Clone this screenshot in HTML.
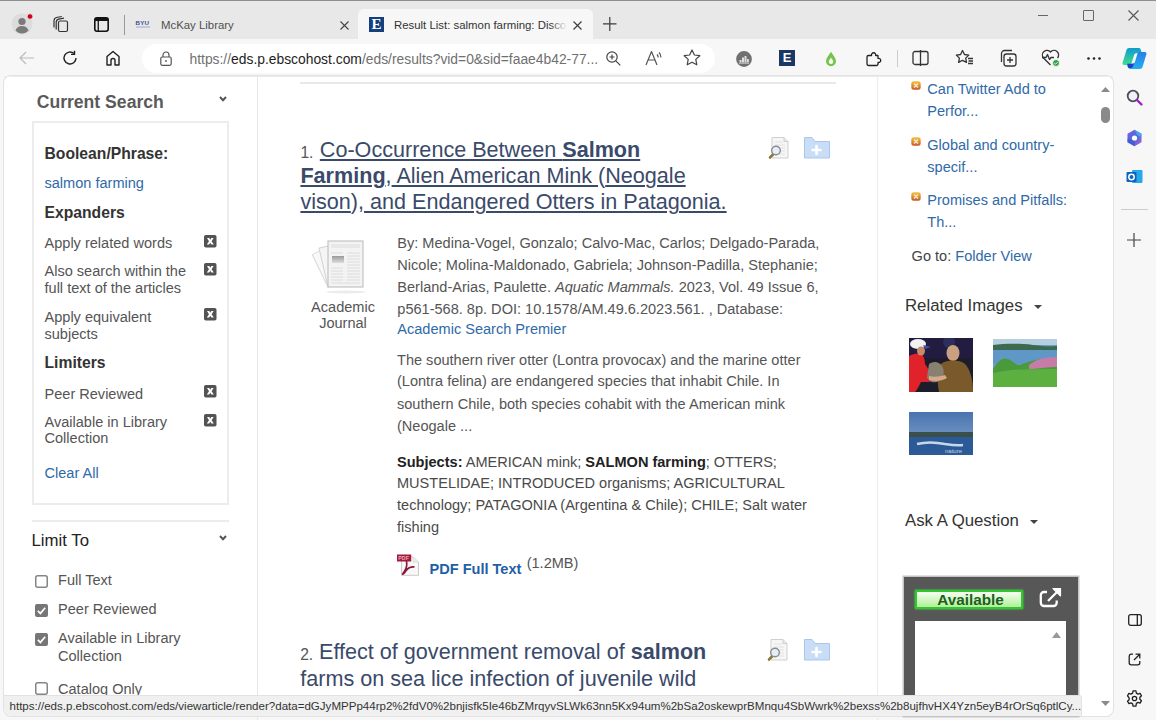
<!DOCTYPE html>
<html><head><meta charset="utf-8">
<style>
*{margin:0;padding:0;box-sizing:border-box}
html,body{width:1156px;height:720px;overflow:hidden;background:#f7f7f7;font-family:"Liberation Sans",sans-serif;position:relative}
.a{position:absolute}
.t{white-space:nowrap}
#tabbar{left:0;top:0;width:1156px;height:39px;background:#e8e8e8;border-top:1px solid #8e8e8e}
#toolbar{left:0;top:39px;width:1156px;height:37px;background:#f7f7f7}
#page{left:4px;top:76px;width:1109px;height:640px;background:#fff;border-radius:7px;overflow:hidden;box-shadow:0 0 0 1px #e4e4e4}
svg{position:absolute;overflow:visible}
.ul{text-decoration:underline;text-decoration-thickness:1.6px;text-underline-offset:1.5px}
</style></head>
<body>
<!-- TAB BAR -->
<div id="tabbar" class="a"></div>
<!-- profile -->
<svg style="left:11px;top:13px" width="22" height="22" viewBox="0 0 22 22">
  <circle cx="11" cy="11" r="10.5" fill="#dcdcdc"/>
  <circle cx="11" cy="8.5" r="3.6" fill="#7a7a7a"/>
  <path d="M4.5 17.5c1-3.2 3.6-4.6 6.5-4.6s5.5 1.4 6.5 4.6c-1.7 1.9-4 3-6.5 3s-4.8-1.1-6.5-3z" fill="#7a7a7a"/>
  <circle cx="19" cy="3.5" r="2.8" fill="#d0021b" stroke="#e8e8e8" stroke-width="0.8"/>
</svg>
<!-- tab actions -->
<svg style="left:52px;top:16px" width="18" height="17" viewBox="0 0 18 17" fill="none" stroke="#333" stroke-width="1.2">
  <rect x="6.5" y="5" width="9" height="10.5" rx="1.5"/>
  <path d="M4.2 13.5V6.3c0-1.5 1-2.8 2.3-3.2l5.5-1"/>
  <path d="M2 11.5V4.5c0-1.5 1-2.6 2.3-3l5.5-1"/>
</svg>
<!-- vertical tabs -->
<svg style="left:94px;top:17px" width="15" height="15" viewBox="0 0 15 15">
  <rect x="0.8" y="0.8" width="13.4" height="13.4" rx="2.2" fill="none" stroke="#111" stroke-width="1.6"/>
  <rect x="0.8" y="0.8" width="13.4" height="3.2" rx="1" fill="#111"/>
  <rect x="3.6" y="3" width="1.3" height="11" fill="#111"/>
</svg>
<div class="a" style="left:124px;top:15px;width:1px;height:20px;background:#9a9a9a"></div>
<!-- McKay tab -->
<div class="a t" style="left:135.5px;top:18.5px;font-size:6.2px;line-height:7px;font-weight:bold;color:#3b4f90;letter-spacing:0.2px">BYU</div>
<div class="a" style="left:136px;top:25.5px;width:14px;height:2px;background:#c4c8d8"></div>
<div class="a t" style="left:161px;top:18.5px;font-size:11.4px;line-height:13px;color:#505050">McKay Library</div>
<svg style="left:339.5px;top:20.5px" width="9" height="9" viewBox="0 0 9 9" stroke="#444" stroke-width="1.1"><path d="M0.5 0.5l8 8M8.5 0.5l-8 8"/></svg>
<!-- active tab -->
<div class="a" style="left:358px;top:9px;width:235px;height:31px;background:#f7f7f7;border-radius:6px 6px 0 0"></div>
<div class="a" style="left:369px;top:17px;width:15px;height:15px;background:#14407e"></div>
<div class="a t" style="left:369px;top:15px;width:15px;text-align:center;font-family:'Liberation Serif',serif;font-weight:bold;font-size:15px;color:#fff;line-height:18px">E</div>
<div class="a t" style="left:394px;top:18.5px;font-size:11.4px;line-height:13px;color:#333;width:175px;overflow:hidden">Result List: salmon farming: Discove</div>
<div class="a" style="left:550px;top:12px;width:20px;height:24px;background:linear-gradient(90deg,rgba(247,247,247,0),#f7f7f7 85%)"></div>
<svg style="left:573px;top:20.5px" width="9" height="9" viewBox="0 0 9 9" stroke="#3a3a3a" stroke-width="1.1"><path d="M0.5 0.5l8 8M8.5 0.5l-8 8"/></svg>
<svg style="left:603px;top:17px" width="14" height="14" viewBox="0 0 14 14" stroke="#3a3a3a" stroke-width="1.2"><path d="M6.8 0v14M0 6.8h13.5"/></svg>
<!-- window controls -->
<div class="a" style="left:1038px;top:15px;width:10px;height:1px;background:#666"></div>
<div class="a" style="left:1083px;top:10px;width:11px;height:11px;border:1px solid #666;border-radius:1px"></div>
<svg style="left:1128px;top:10px" width="11" height="11" viewBox="0 0 11 11" stroke="#555" stroke-width="1.1"><path d="M0.5 0.5l10 10M10.5 0.5l-10 10"/></svg>

<!-- TOOLBAR -->
<div id="toolbar" class="a"></div>
<svg style="left:19px;top:51px" width="16" height="14" viewBox="0 0 16 14" fill="none" stroke="#bbb" stroke-width="1.2"><path d="M15 7H1.5M7 1L1 7l6 6"/></svg>
<svg style="left:62px;top:50px" width="16" height="16" viewBox="0 0 16 16" fill="none" stroke="#222" stroke-width="1.4"><path d="M14 8a6 6 0 1 1-2-4.5"/><path d="M12.5 0.8v3.6H9"/></svg>
<svg style="left:105px;top:50px" width="16" height="16" viewBox="0 0 16 16" fill="none" stroke="#222" stroke-width="1.4"><path d="M2 15V6.5L8 1.5l6 5V15h-4v-4.5a2 2 0 0 0-4 0V15z" stroke-linejoin="round"/></svg>
<div class="a" style="left:142px;top:44px;width:573px;height:29px;background:#fff;border-radius:15px"></div>
<svg style="left:160px;top:51px" width="12" height="15" viewBox="0 0 12 15" fill="none" stroke="#555" stroke-width="1.2"><rect x="0.8" y="6" width="10.4" height="8.3" rx="1.5"/><path d="M3 6V4a3 3 0 0 1 6 0v2"/><circle cx="6" cy="10" r="0.9" fill="#555" stroke="none"/></svg>
<div class="a t" style="left:189.5px;top:51px;font-size:13.85px;line-height:16px;color:#707070"><span>https://</span><span style="color:#1e1e1e">eds.p.ebscohost.com</span>/eds/results?vid=0&amp;sid=faae4b42-77...</div>
<svg style="left:606px;top:51px" width="15" height="15" viewBox="0 0 15 15" fill="none" stroke="#444" stroke-width="1.2"><circle cx="6" cy="6" r="5.2"/><path d="M9.8 9.8l4.5 4.5M6 3.5v5M3.5 6h5"/></svg>
<svg style="left:645px;top:50px" width="18" height="16" viewBox="0 0 18 16" fill="none" stroke="#555" stroke-width="1.2" stroke-linejoin="round"><path d="M1 15L6.5 1.5 12 15M3 10h7"/><path d="M12 4.5c.8.8 1.2 1.8 1.2 3M14 2.5c1.3 1.3 2 3 2 5"/></svg>
<svg style="left:683px;top:49px" width="18" height="17" viewBox="0 0 18 17" fill="none" stroke="#444" stroke-width="1.2" stroke-linejoin="round"><path d="M9 1l2.4 5 5.4.7-4 3.7 1 5.4L9 13.2l-4.8 2.6 1-5.4-4-3.7L6.6 6z"/></svg>
<!-- extension icons -->
<svg style="left:736px;top:51px" width="16" height="16" viewBox="0 0 16 16"><circle cx="8" cy="8" r="7.9" fill="#707070"/><path d="M3.5 11.5V9h2v2.5zm2.5 0V6.5h2v5zm2.5 0V5h2v6.5zm2.5 0V8h1.8v3.5z" fill="#e0e0e0"/><path d="M3 12.2h10" stroke="#e0e0e0" stroke-width="0.8"/></svg>
<div class="a" style="left:779px;top:50px;width:16px;height:16px;background:#1b3764"></div>
<div class="a t" style="left:779px;top:50px;width:16px;font-size:13px;font-weight:bold;color:#fff;text-align:center;line-height:16px">E</div>
<svg style="left:824.5px;top:50.5px" width="12" height="16" viewBox="0 0 12 16"><path d="M6 0.8C3.8 4.3 1 7.5 1 10.3a5 5 0 0 0 10 0C11 7.5 8.2 4.3 6 0.8z" fill="#74c44a"/><path d="M6 6.5c-1 1.6-2.3 3-2.3 4.2a2.3 2.3 0 0 0 4.6 0c0-1.2-1.3-2.6-2.3-4.2z" fill="#f4fbef"/></svg>
<svg style="left:865px;top:50px" width="17" height="17" viewBox="0 0 17 17" fill="none" stroke="#222" stroke-width="1.3" stroke-linejoin="round"><path d="M3.5 5.5H6.6A2.1 2.1 0 1 1 10.6 5.5H13V8.4A2.1 2.1 0 1 1 13 12.4V14a1.5 1.5 0 0 1-1.5 1.5H3.5A1.5 1.5 0 0 1 2 14V7a1.5 1.5 0 0 1 1.5-1.5z"/></svg>
<div class="a" style="left:897px;top:50px;width:1px;height:17px;background:#ccc"></div>
<svg style="left:912px;top:50px" width="17" height="16" viewBox="0 0 17 16" fill="none" stroke="#333" stroke-width="1.3"><rect x="1" y="1.5" width="15" height="13" rx="2"/><path d="M8.5 0v16"/></svg>
<svg style="left:955px;top:49px" width="19" height="17" viewBox="0 0 19 17" fill="none" stroke="#333" stroke-width="1.3" stroke-linejoin="round"><path d="M7.5 1.5l2 4 4.3.6-3.1 3 .8 4.3-4-2.1-3.9 2.1.8-4.3-3.1-3 4.3-.6z"/><path d="M13 9.5h5M13.5 12h4.5M13 14.5h5"/></svg>
<svg style="left:999px;top:49px" width="18" height="18" viewBox="0 0 18 18" fill="none" stroke="#333" stroke-width="1.3"><rect x="5" y="5" width="12" height="12" rx="2.5"/><path d="M2.5 13V4.5A3 3 0 0 1 5.5 1.5H13"/><path d="M11 8v6M8 11h6"/></svg>
<svg style="left:1041px;top:49px" width="19" height="18" viewBox="0 0 19 18" fill="none" stroke="#333" stroke-width="1.3" stroke-linejoin="round"><path d="M9.5 16L2.5 9A4 4 0 0 1 9.5 3a4 4 0 0 1 7 6"/><path d="M1 8.5h4l1.5-3 2 5 1.5-2h3"/><circle cx="15" cy="14" r="3.5" fill="#2ea043" stroke="#f7f7f7" stroke-width="1"/><path d="M13.3 14l1.2 1.2 2-2" stroke="#fff" stroke-width="1"/></svg>
<svg style="left:1087px;top:57px" width="14" height="3" viewBox="0 0 14 3" fill="#222"><circle cx="1.5" cy="1.5" r="1.3"/><circle cx="7" cy="1.5" r="1.3"/><circle cx="12.5" cy="1.5" r="1.3"/></svg>
<svg style="left:1122px;top:47px" width="25" height="23" viewBox="0 0 25 23">
  <defs><linearGradient id="cg1" x1="0" y1="0" x2="0" y2="1"><stop offset="0" stop-color="#0f9ad0"/><stop offset="1" stop-color="#3ee08a"/></linearGradient>
  <linearGradient id="cg2" x1="0" y1="0" x2="0" y2="1"><stop offset="0" stop-color="#2a7ee8"/><stop offset="1" stop-color="#22b0f0"/></linearGradient></defs>
  <path d="M7 1h9.5c1.3 0 2 .6 2.3 1.8l1 3.5H14.5c-1.2 0-2 .7-2.4 1.8L9.5 16.5c-.4 1-1.2 1.5-2.3 1.5H2.2c-1.3 0-2-1-1.6-2.3L4.5 3C5 1.7 5.8 1 7 1z" fill="url(#cg1)"/>
  <path d="M18 22H8.5c-1.3 0-2-.6-2.3-1.8l-1-3.5h5.3c1.2 0 2-.7 2.4-1.8L15.5 6.5c.4-1 1.2-1.5 2.3-1.5h5c1.3 0 2 1 1.6 2.3L20.5 20c-.5 1.3-1.3 2-2.5 2z" fill="url(#cg2)"/>
  <path d="M5.3 16.7h5.2c.8 0 1.3-.3 1.7-.9L11 19.5c-.4.9-1 1.4-2 1.4H7.5c-1 0-1.6-.6-1.9-1.5z" fill="#1f3fc8"/>
</svg>

<!-- PAGE -->
<div class="a" style="left:4px;top:76px;width:1109px;height:640px;background:#fff;border-radius:7px;box-shadow:0 0 0 1px #e2e2e2"></div>
<div class="a" style="left:4px;top:76px;width:1109px;height:1px;background:#ececec"></div>
<div class="a" style="left:257px;top:76px;width:1px;height:644px;background:#e6e6e6"></div>
<div class="a" style="left:877px;top:76px;width:1px;height:644px;background:#ececec"></div>
<div class="a" style="left:300px;top:82px;width:536px;height:2px;background:#e9e9e9"></div>
<div class="a t " style="left:36.7px;top:93.37px;font-size:17.6px;line-height:19.66px;color:#5a5a5a;font-weight:bold;">Current Search</div>
<svg style="left:218.5px;top:95.5px" width="8" height="6" viewBox="0 0 8 6" fill="none" stroke="#555" stroke-width="2"><path d="M1 1l3 3.2L7 1"/></svg>
<div class="a" style="left:32px;top:121px;width:197px;height:384px;border:2px solid #ececec"></div>
<div class="a t " style="left:44.5px;top:144.79px;font-size:15.7px;line-height:17.54px;color:#333;font-weight:bold;">Boolean/Phrase:</div>
<div class="a t " style="left:44.5px;top:174.53px;font-size:14.55px;line-height:16.25px;color:#2f6aa8;font-weight:normal;">salmon farming</div>
<div class="a t " style="left:44.5px;top:203.99px;font-size:15.7px;line-height:17.54px;color:#333;font-weight:bold;">Expanders</div>
<div class="a t " style="left:44.5px;top:234.83px;font-size:14.55px;line-height:16.25px;color:#555;font-weight:normal;">Apply related words</div>
<svg style="left:203.5px;top:235px" width="12.5" height="12.5" viewBox="0 0 12.5 12.5"><rect x="0" y="0" width="12.5" height="12.5" rx="1.8" fill="#535353"/><path d="M3 3h2.3l1 1.7 1-1.7h2.3L7.6 6.2l2.2 3.3H7.4L6.3 7.7 5.2 9.5H2.8L5 6.2z" fill="#fff"/></svg>
<div class="a t " style="left:44.5px;top:263.33px;font-size:14.55px;line-height:16.25px;color:#555;font-weight:normal;">Also search within the</div>
<div class="a t " style="left:44.5px;top:280.23px;font-size:14.55px;line-height:16.25px;color:#555;font-weight:normal;">full text of the articles</div>
<svg style="left:203.5px;top:263px" width="12.5" height="12.5" viewBox="0 0 12.5 12.5"><rect x="0" y="0" width="12.5" height="12.5" rx="1.8" fill="#535353"/><path d="M3 3h2.3l1 1.7 1-1.7h2.3L7.6 6.2l2.2 3.3H7.4L6.3 7.7 5.2 9.5H2.8L5 6.2z" fill="#fff"/></svg>
<div class="a t " style="left:44.5px;top:309.03px;font-size:14.55px;line-height:16.25px;color:#555;font-weight:normal;">Apply equivalent</div>
<div class="a t " style="left:44.5px;top:325.83px;font-size:14.55px;line-height:16.25px;color:#555;font-weight:normal;">subjects</div>
<svg style="left:203.5px;top:308px" width="12.5" height="12.5" viewBox="0 0 12.5 12.5"><rect x="0" y="0" width="12.5" height="12.5" rx="1.8" fill="#535353"/><path d="M3 3h2.3l1 1.7 1-1.7h2.3L7.6 6.2l2.2 3.3H7.4L6.3 7.7 5.2 9.5H2.8L5 6.2z" fill="#fff"/></svg>
<div class="a t " style="left:44.5px;top:354.19px;font-size:15.7px;line-height:17.54px;color:#333;font-weight:bold;">Limiters</div>
<div class="a t " style="left:44.5px;top:385.83px;font-size:14.55px;line-height:16.25px;color:#555;font-weight:normal;">Peer Reviewed</div>
<svg style="left:203.5px;top:385px" width="12.5" height="12.5" viewBox="0 0 12.5 12.5"><rect x="0" y="0" width="12.5" height="12.5" rx="1.8" fill="#535353"/><path d="M3 3h2.3l1 1.7 1-1.7h2.3L7.6 6.2l2.2 3.3H7.4L6.3 7.7 5.2 9.5H2.8L5 6.2z" fill="#fff"/></svg>
<div class="a t " style="left:44.5px;top:414.03px;font-size:14.55px;line-height:16.25px;color:#555;font-weight:normal;">Available in Library</div>
<div class="a t " style="left:44.5px;top:430.23px;font-size:14.55px;line-height:16.25px;color:#555;font-weight:normal;">Collection</div>
<svg style="left:203.5px;top:414px" width="12.5" height="12.5" viewBox="0 0 12.5 12.5"><rect x="0" y="0" width="12.5" height="12.5" rx="1.8" fill="#535353"/><path d="M3 3h2.3l1 1.7 1-1.7h2.3L7.6 6.2l2.2 3.3H7.4L6.3 7.7 5.2 9.5H2.8L5 6.2z" fill="#fff"/></svg>
<div class="a t " style="left:44.5px;top:464.63px;font-size:14.55px;line-height:16.25px;color:#2f6aa8;font-weight:normal;">Clear All</div>
<div class="a" style="left:32px;top:520px;width:197px;height:2px;background:#ececec"></div>
<div class="a t " style="left:31.5px;top:532.40px;font-size:16.8px;line-height:18.77px;color:#222;font-weight:normal;">Limit To</div>
<svg style="left:218.5px;top:535px" width="8" height="6" viewBox="0 0 8 6" fill="none" stroke="#555" stroke-width="2"><path d="M1 1l3 3.2L7 1"/></svg>
<svg style="left:35px;top:575px" width="13" height="13" viewBox="0 0 13 13"><rect x="0.75" y="0.75" width="11.5" height="11.5" rx="2" fill="#fff" stroke="#858585" stroke-width="1.5"/></svg>
<div class="a t " style="left:58px;top:572.43px;font-size:14.55px;line-height:16.25px;color:#555;font-weight:normal;">Full Text</div>
<svg style="left:35px;top:604px" width="13" height="13" viewBox="0 0 13 13"><rect x="0" y="0" width="13" height="13" rx="2" fill="#767676"/><path d="M2.8 6.8l2.6 2.6 4.8-5.6" fill="none" stroke="#fff" stroke-width="1.7"/></svg>
<div class="a t " style="left:58px;top:600.83px;font-size:14.55px;line-height:16.25px;color:#555;font-weight:normal;">Peer Reviewed</div>
<svg style="left:35px;top:633px" width="13" height="13" viewBox="0 0 13 13"><rect x="0" y="0" width="13" height="13" rx="2" fill="#767676"/><path d="M2.8 6.8l2.6 2.6 4.8-5.6" fill="none" stroke="#fff" stroke-width="1.7"/></svg>
<div class="a t " style="left:58px;top:630.43px;font-size:14.55px;line-height:16.25px;color:#555;font-weight:normal;">Available in Library</div>
<div class="a t " style="left:58px;top:647.53px;font-size:14.55px;line-height:16.25px;color:#555;font-weight:normal;">Collection</div>
<svg style="left:35px;top:682px" width="13" height="13" viewBox="0 0 13 13"><rect x="0.75" y="0.75" width="11.5" height="11.5" rx="2" fill="#fff" stroke="#858585" stroke-width="1.5"/></svg>
<div class="a t " style="left:58px;top:680.83px;font-size:14.55px;line-height:16.25px;color:#555;font-weight:normal;">Catalog Only</div>
<div class="a t " style="left:300.4px;top:144.38px;font-size:15.6px;line-height:17.43px;color:#555;font-weight:normal;">1.</div>
<div class="a t " style="left:319.8px;top:138.45px;font-size:21.6px;line-height:24.13px;color:#3a4a6a;font-weight:normal;"><span class="ul">Co-Occurrence Between <b>Salmon</b></span></div>
<div class="a t " style="left:300.4px;top:164.05px;font-size:21.6px;line-height:24.13px;color:#3a4a6a;font-weight:normal;"><span class="ul"><b>Farming</b></span>,<span class="ul"> Alien American Mink </span>(<span class="ul">Neogale</span></div>
<div class="a t " style="left:300.4px;top:190.45px;font-size:21.6px;line-height:24.13px;color:#3a4a6a;font-weight:normal;"><span class="ul">vison</span>),<span class="ul"> and Endangered Otters in Patagonia.</span></div>
<div class="a t " style="left:397.3px;top:234.83px;font-size:14.55px;line-height:16.25px;color:#555;font-weight:normal;">By: Medina-Vogel, Gonzalo; Calvo-Mac, Carlos; Delgado-Parada,</div>
<div class="a t " style="left:397.3px;top:257.03px;font-size:14.55px;line-height:16.25px;color:#555;font-weight:normal;">Nicole; Molina-Maldonado, Gabriela; Johnson-Padilla, Stephanie;</div>
<div class="a t " style="left:397.3px;top:279.33px;font-size:14.55px;line-height:16.25px;color:#555;font-weight:normal;">Berland-Arias, Paulette. <i>Aquatic Mammals.</i> 2023, Vol. 49 Issue 6,</div>
<div class="a t " style="left:397.3px;top:301.33px;font-size:14.55px;line-height:16.25px;color:#555;font-weight:normal;">p561-568. 8p. DOI: 10.1578/AM.49.6.2023.561. , Database:</div>
<div class="a t " style="left:397.3px;top:321.43px;font-size:14.55px;line-height:16.25px;color:#2f6aa8;font-weight:normal;">Academic Search Premier</div>
<div class="a t " style="left:343px;top:299.23px;font-size:14.55px;line-height:16.25px;color:#555;font-weight:normal;transform:translateX(-50%)">Academic</div>
<div class="a t " style="left:343px;top:315.23px;font-size:14.55px;line-height:16.25px;color:#555;font-weight:normal;transform:translateX(-50%)">Journal</div>
<div class="a t " style="left:397px;top:352.43px;font-size:14.55px;line-height:16.25px;color:#555;font-weight:normal;">The southern river otter (Lontra provocax) and the marine otter</div>
<div class="a t " style="left:397px;top:373.23px;font-size:14.55px;line-height:16.25px;color:#555;font-weight:normal;">(Lontra felina) are endangered species that inhabit Chile. In</div>
<div class="a t " style="left:397px;top:395.83px;font-size:14.55px;line-height:16.25px;color:#555;font-weight:normal;">southern Chile, both species cohabit with the American mink</div>
<div class="a t " style="left:397px;top:417.53px;font-size:14.55px;line-height:16.25px;color:#555;font-weight:normal;">(Neogale ...</div>
<div class="a t " style="left:397px;top:453.53px;font-size:14.55px;line-height:16.25px;color:#4a4a4a;font-weight:normal;"><b style="color:#222">Subjects:</b> AMERICAN mink; <b style="color:#222">SALMON farming</b>; OTTERS;</div>
<div class="a t " style="left:397px;top:474.83px;font-size:14.55px;line-height:16.25px;color:#4a4a4a;font-weight:normal;">MUSTELIDAE; INTRODUCED organisms; AGRICULTURAL</div>
<div class="a t " style="left:397px;top:496.83px;font-size:14.55px;line-height:16.25px;color:#4a4a4a;font-weight:normal;">technology; PATAGONIA (Argentina &amp; Chile); CHILE; Salt water</div>
<div class="a t " style="left:397px;top:518.63px;font-size:14.55px;line-height:16.25px;color:#4a4a4a;font-weight:normal;">fishing</div>
<div class="a t " style="left:429.5px;top:560.53px;font-size:14.55px;line-height:16.25px;color:#1f5fa6;font-weight:bold;">PDF Full Text</div>
<div class="a t " style="left:526.7px;top:554.63px;font-size:14.55px;line-height:16.25px;color:#555;font-weight:normal;">(1.2MB)</div>
<div class="a t " style="left:300.2px;top:645.88px;font-size:15.6px;line-height:17.43px;color:#555;font-weight:normal;">2.</div>
<div class="a t " style="left:319px;top:640.25px;font-size:21.6px;line-height:24.13px;color:#3a4a6a;font-weight:normal;">Effect of government removal of <b>salmon</b></div>
<div class="a t " style="left:300.2px;top:667.05px;font-size:21.6px;line-height:24.13px;color:#3a4a6a;font-weight:normal;">farms on sea lice infection of juvenile wild</div>
<svg style="left:911px;top:81px" width="10" height="9" viewBox="0 0 10 9"><defs><linearGradient id="og81" x1="0" y1="0" x2="0" y2="1"><stop offset="0" stop-color="#f2c23a"/><stop offset="1" stop-color="#c8582a"/></linearGradient></defs><rect x="0.3" y="0.3" width="9.4" height="8.4" rx="2.3" fill="url(#og81)"/><path d="M3 2.5l4 4M7 2.5l-4 4" stroke="#fff5e0" stroke-width="1.7" opacity="0.85"/></svg>
<div class="a t " style="left:927.3px;top:81.13px;font-size:14.55px;line-height:16.25px;color:#2f6aa8;font-weight:normal;">Can Twitter Add to</div>
<div class="a t " style="left:927.3px;top:103.23px;font-size:14.55px;line-height:16.25px;color:#2f6aa8;font-weight:normal;">Perfor...</div>
<svg style="left:911px;top:137px" width="10" height="9" viewBox="0 0 10 9"><defs><linearGradient id="og137" x1="0" y1="0" x2="0" y2="1"><stop offset="0" stop-color="#f2c23a"/><stop offset="1" stop-color="#c8582a"/></linearGradient></defs><rect x="0.3" y="0.3" width="9.4" height="8.4" rx="2.3" fill="url(#og137)"/><path d="M3 2.5l4 4M7 2.5l-4 4" stroke="#fff5e0" stroke-width="1.7" opacity="0.85"/></svg>
<div class="a t " style="left:927.3px;top:136.83px;font-size:14.55px;line-height:16.25px;color:#2f6aa8;font-weight:normal;">Global and country-</div>
<div class="a t " style="left:927.3px;top:158.83px;font-size:14.55px;line-height:16.25px;color:#2f6aa8;font-weight:normal;">specif...</div>
<svg style="left:911px;top:192px" width="10" height="9" viewBox="0 0 10 9"><defs><linearGradient id="og192" x1="0" y1="0" x2="0" y2="1"><stop offset="0" stop-color="#f2c23a"/><stop offset="1" stop-color="#c8582a"/></linearGradient></defs><rect x="0.3" y="0.3" width="9.4" height="8.4" rx="2.3" fill="url(#og192)"/><path d="M3 2.5l4 4M7 2.5l-4 4" stroke="#fff5e0" stroke-width="1.7" opacity="0.85"/></svg>
<div class="a t " style="left:927.3px;top:192.13px;font-size:14.55px;line-height:16.25px;color:#2f6aa8;font-weight:normal;">Promises and Pitfalls:</div>
<div class="a t " style="left:927.3px;top:213.83px;font-size:14.55px;line-height:16.25px;color:#2f6aa8;font-weight:normal;">Th...</div>
<div class="a t " style="left:911.6px;top:248.43px;font-size:14.55px;line-height:16.25px;color:#444;font-weight:normal;">Go to: <span style="color:#2f6aa8">Folder View</span></div>
<div class="a t " style="left:905px;top:296.80px;font-size:16.8px;line-height:18.77px;color:#333;font-weight:normal;">Related Images</div>
<svg style="left:1034px;top:305px" width="8" height="4" viewBox="0 0 8 4"><path d="M0 0h8L4 4z" fill="#444"/></svg>
<svg style="left:1030px;top:520px" width="8" height="4" viewBox="0 0 8 4"><path d="M0 0h8L4 4z" fill="#444"/></svg>
<div class="a t " style="left:905px;top:511.60px;font-size:16.8px;line-height:18.77px;color:#333;font-weight:normal;">Ask A Question</div>
<svg style="left:768px;top:137px" width="24" height="22" viewBox="0 0 24 22">
<path d="M4 0.5h12l4 4v16.5H4z" fill="#f6f6f6" stroke="#cfcfcf" stroke-width="1"/>
<path d="M16 0.5v4h4" fill="#e6e6e6" stroke="#cfcfcf" stroke-width="1"/>
<path d="M7 5h8M7 8h10M7 11h10M7 14h10M7 17h10" stroke="#e2e2e2" stroke-width="1"/>
<path d="M2 20.5l3.5-3.5" stroke="#8a7a3a" stroke-width="2.6" stroke-linecap="round"/>
<circle cx="8" cy="13.5" r="4.3" fill="#e8eef8" stroke="#8c8c8c" stroke-width="1.4"/>
</svg>
<svg style="left:804px;top:137px" width="26" height="22" viewBox="0 0 26 22">
<path d="M0.5 0.5h7.5l3 4h14.5v16.5H0.5z" fill="#c9def6" stroke="#a9c7ec" stroke-width="1"/>
<path d="M12.5 9v8M8.5 13h8" stroke="#fff" stroke-width="2.6" stroke-linecap="round"/>
</svg>
<svg style="left:767px;top:639px" width="24" height="22" viewBox="0 0 24 22">
<path d="M4 0.5h12l4 4v16.5H4z" fill="#f6f6f6" stroke="#cfcfcf" stroke-width="1"/>
<path d="M16 0.5v4h4" fill="#e6e6e6" stroke="#cfcfcf" stroke-width="1"/>
<path d="M7 5h8M7 8h10M7 11h10M7 14h10M7 17h10" stroke="#e2e2e2" stroke-width="1"/>
<path d="M2 20.5l3.5-3.5" stroke="#8a7a3a" stroke-width="2.6" stroke-linecap="round"/>
<circle cx="8" cy="13.5" r="4.3" fill="#e8eef8" stroke="#8c8c8c" stroke-width="1.4"/>
</svg>
<svg style="left:804px;top:639px" width="26" height="22" viewBox="0 0 26 22">
<path d="M0.5 0.5h7.5l3 4h14.5v16.5H0.5z" fill="#c9def6" stroke="#a9c7ec" stroke-width="1"/>
<path d="M12.5 9v8M8.5 13h8" stroke="#fff" stroke-width="2.6" stroke-linecap="round"/>
</svg>
<svg style="left:311px;top:239px" width="55" height="56" viewBox="0 0 55 56">
<defs><linearGradient id="jg" x1="0" y1="0" x2="0" y2="1"><stop offset="0" stop-color="#999"/><stop offset="1" stop-color="#ddd"/></linearGradient></defs>
<g transform="rotate(-26 17 48)"><rect x="17" y="12" width="26" height="36" fill="#f8f8f8" stroke="#dadada"/></g>
<g transform="rotate(-13 17 48)"><rect x="17" y="8" width="28" height="40" fill="#f5f5f5" stroke="#d2d2d2"/></g>
<rect x="17" y="2" width="35" height="46" fill="#f3f3f3" stroke="#c4c4c4" stroke-width="1.2"/>
<path d="M20 6h29M20 8h29M20 14h12M36 14h13M36 17h13M36 20h13M36 23h13M36 26h13M20 29h12M36 29h13M20 32h12M36 32h13M20 35h12M36 35h13M20 38h12M36 38h13M20 41h12M36 41h13M20 44h29" stroke="#dcdcdc" stroke-width="1"/>
<rect x="21" y="17" width="12" height="7" fill="url(#jg)"/>
<ellipse cx="35" cy="53" rx="20" ry="1.5" fill="#ececec"/>
</svg>
<svg style="left:396px;top:554px" width="24" height="23" viewBox="0 0 24 23">
<path d="M5.5 3h11.5l5.5 5v13.3H5.5z" fill="#f8f8f8" stroke="#cacaca" stroke-width="1"/>
<path d="M17 3v5h5.5" fill="#ececec" stroke="#d8d8d8" stroke-width="0.8"/>
<rect x="1" y="0.5" width="14.2" height="7" fill="#a01c3c"/>
<text x="2.3" y="6" font-size="5.3" font-weight="bold" fill="#f0a8b8" font-family="Liberation Sans">PDF</text>
<path d="M10.5 7.5c.8 3 .3 5.5-1.5 9s-2.6 3.3-2.4 3.6c.4.3 1.8-.9 3.5-3.5 1.8-2.6 4-3.8 7.8-3.7" fill="none" stroke="#8e1638" stroke-width="1.7" stroke-linecap="round"/>
</svg>
<svg style="left:909px;top:338px;overflow:hidden" width="64" height="54" viewBox="0 0 64 54"><defs><filter id="bl1"><feGaussianBlur stdDeviation="0.7"/></filter></defs><g filter="url(#bl1)">
<rect width="64" height="54" fill="#1c1a2a"/>
<rect x="0" y="0" width="64" height="20" fill="#201c40"/>
<circle cx="40" cy="4" r="6" fill="#3a3a70" opacity="0.6"/>
<path d="M0 18c4-2 8-3 12-2 3 2 4 6 4 10l4 6c3 3 5 6 5 10l-5 2-8 0c-2 4-4 8-6 10H0z" fill="#e0202a"/>
<ellipse cx="9" cy="6" rx="8" ry="5" fill="#f2f2f2"/>
<path d="M14 7l8 2-6 2z" fill="#3b4fa8"/>
<ellipse cx="12" cy="13" rx="4" ry="4.5" fill="#c98a6a"/>
<ellipse cx="44" cy="15" rx="6.5" ry="8" fill="#c9a080"/>
<path d="M32 26c4-4 18-5 24 0 5 5 8 15 8 28H30c-2-10-2-20 2-28z" fill="#7a5a2a"/>
<path d="M20 26c5-4 12-2 14 4 2 6 0 12-6 14-5 1-9-1-10-5z" fill="#888070"/>
<path d="M20 38c4 1 10 1 16-1l2 3c-5 3-12 4-18 2z" fill="#d8a888"/>
</g></svg>
<svg style="left:993px;top:339px;overflow:hidden" width="64" height="48" viewBox="0 0 64 48"><defs><filter id="bl2"><feGaussianBlur stdDeviation="0.7"/></filter></defs><g filter="url(#bl2)">
<rect width="64" height="48" fill="#6aa0c8"/>
<rect width="64" height="6" fill="#b6cfe0"/>
<path d="M0 6c10-1 25-2 40 0s20 1 24 1v4H0z" fill="#3c6a50"/>
<rect x="0" y="11" width="64" height="14" fill="#5e98c6"/>
<path d="M0 30c5-8 10-12 14-10 4 0 8 6 12 6 8-2 20-8 38-6v28H0z" fill="#4a9a3a"/>
<path d="M36 26c6-5 14-8 28-8v10c-10 0-20 2-28 2z" fill="#c77ca8"/>
<path d="M0 34c15-4 40-4 64-4v18H0z" fill="#5cb040"/>
</g></svg>
<svg style="left:909px;top:412px;overflow:hidden" width="64" height="43" viewBox="0 0 64 43"><g>
<defs><linearGradient id="sk" x1="0" y1="0" x2="0" y2="1"><stop offset="0" stop-color="#4a74b0"/><stop offset="1" stop-color="#8aaad0"/></linearGradient></defs>
<rect width="64" height="43" fill="url(#sk)"/>
<rect x="0" y="20" width="64" height="5" fill="#3a4e4a"/>
<rect x="0" y="25" width="64" height="18" fill="#2c5a96"/>
<path d="M8 32c8-2 18-2 28 0 6 1 12 2 18 1" stroke="#c8d8e8" stroke-width="2.5" fill="none"/>
<text x="36" y="41" font-size="6" fill="#c8d4e4" font-family="Liberation Sans">nature</text>
</g></svg>
<div class="a" style="left:904px;top:577px;width:174px;height:139px;background:#575757;box-shadow:0 0 0 1.5px #c4c4c4"></div>
<div class="a" style="left:915px;top:589.5px;width:108px;height:19.5px;background:linear-gradient(#f6fff2,#b0f098);border:2px solid #2ec82e;box-shadow:0 0 2px #44ee44"></div>
<div class="a t " style="left:970.5px;top:590.75px;font-size:15.3px;line-height:17.09px;color:#1e5e1e;font-weight:bold;transform:translateX(-50%)">Available</div>
<svg style="left:1039px;top:587px" width="23" height="21" viewBox="0 0 23 21" fill="none" stroke="#fff" stroke-width="2.3" stroke-linejoin="round">
<path d="M8 5H5a3.2 3.2 0 0 0-3.2 3.2v7.6A3.2 3.2 0 0 0 5 19h9.5a3.2 3.2 0 0 0 3.2-3.2V13.5"/>
<path d="M9 14L18.5 4.5"/><path d="M14 1.5h7.5V9z" fill="#fff" stroke-width="1.2"/>
</svg>
<div class="a" style="left:915px;top:621px;width:151px;height:95px;background:#fff"></div>
<svg style="left:1052px;top:632px" width="9" height="6" viewBox="0 0 9 6"><path d="M0 6L4.5 0 9 6z" fill="#999"/></svg>
<svg style="left:1101px;top:87px" width="9" height="5" viewBox="0 0 9 5"><path d="M0 5L4.5 0 9 5z" fill="#8a8a8a"/></svg>
<div class="a" style="left:1101px;top:107px;width:9px;height:16px;background:#8a8a8a;border-radius:4.5px"></div>
<svg style="left:1101px;top:701px" width="9" height="5" viewBox="0 0 9 5"><path d="M0 0h9L4.5 5z" fill="#8a8a8a"/></svg>
<div class="a" style="left:4px;top:695px;width:1078px;height:21px;background:#f0f0f0;border-top:1px solid #e2e2e2;border-right:1px solid #e2e2e2;border-radius:0 3px 0 7px"></div>
<div class="a t " style="left:9.5px;top:700.05px;font-size:11.55px;line-height:12.90px;color:#333;font-weight:normal;">https://eds.p.ebscohost.com/eds/viewarticle/render?data=dGJyMPPp44rp2%2fdV0%2bnjisfk5Ie46bZMrqyvSLWk63nn5Kx94um%2bSa2oskewprBMnqu4SbWwrk%2bexss%2b8ujfhvHX4Yzn5eyB4rOrSq6ptlCy...</div>
<!-- EDGE SIDEBAR -->
<svg style="left:1126px;top:89px" width="17" height="17" viewBox="0 0 17 17" fill="none"><circle cx="7" cy="7" r="5.3" fill="#eef2f8" stroke="#505050" stroke-width="1.8"/><path d="M11 11l4.5 4.5" stroke="#a020c0" stroke-width="2.4" stroke-linecap="round"/></svg>
<svg style="left:1126px;top:129px" width="17" height="18" viewBox="0 0 17 18">
<defs><linearGradient id="mg" x1="0" y1="0" x2="1" y2="1"><stop offset="0" stop-color="#8a5ad8"/><stop offset="0.5" stop-color="#4a6ae0"/><stop offset="1" stop-color="#b060d0"/></linearGradient></defs>
<path d="M8.5 0.8l7 4v8.4l-7 4-7-4V4.8z" fill="url(#mg)"/>
<path d="M8.5 0.8l7 4v3.5L11 6z" fill="#40b8e8" opacity="0.8"/>
<path d="M1.5 9.5v3.7l7 4 .5-5z" fill="#3a58d0" opacity="0.7"/>
<circle cx="8.5" cy="9" r="2.6" fill="#fff"/>
</svg>
<svg style="left:1126px;top:168px" width="17" height="17" viewBox="0 0 17 17"><rect x="6" y="2" width="10.5" height="13" rx="1" fill="#28a8ea"/><rect x="0.5" y="4" width="10" height="10" rx="1" fill="#0a64c0"/><circle cx="5.5" cy="9" r="2.7" fill="none" stroke="#fff" stroke-width="1.5"/></svg>
<div class="a" style="left:1121px;top:209px;width:27px;height:1px;background:#ccc"></div>
<svg style="left:1127px;top:233px" width="14" height="14" viewBox="0 0 14 14" stroke="#444" stroke-width="1.2"><path d="M7 0v14M0 7h14"/></svg>
<svg style="left:1127.5px;top:614px" width="14" height="12" viewBox="0 0 14 12" fill="none" stroke="#222" stroke-width="1.3"><rect x="0.7" y="0.7" width="12.6" height="10.6" rx="2"/><path d="M9.3 0.7v10.6"/></svg>
<svg style="left:1128px;top:653px" width="13" height="13" viewBox="0 0 13 13" fill="none" stroke="#222" stroke-width="1.3"><path d="M5 1.2H3a2 2 0 0 0-1.8 2v6.6a2 2 0 0 0 2 2h6.6a2 2 0 0 0 2-2V8"/><path d="M7.5 1.2h4.3v4.3M11.8 1.2L6 7"/></svg>
<svg style="left:1125.5px;top:690px" width="17" height="17" viewBox="0 0 18 18" fill="none" stroke="#222" stroke-width="1.4" stroke-linejoin="round"><path d="M7.5 1h3l.5 2.3 1.7 1 2.2-.8 1.5 2.6-1.7 1.6v2l1.7 1.6-1.5 2.6-2.2-.8-1.7 1L10.5 17h-3L7 14.7l-1.7-1-2.2.8-1.5-2.6 1.7-1.6v-2L1.6 6.1l1.5-2.6 2.2.8 1.7-1z"/><circle cx="9" cy="9" r="2.3"/></svg>
</body></html>
